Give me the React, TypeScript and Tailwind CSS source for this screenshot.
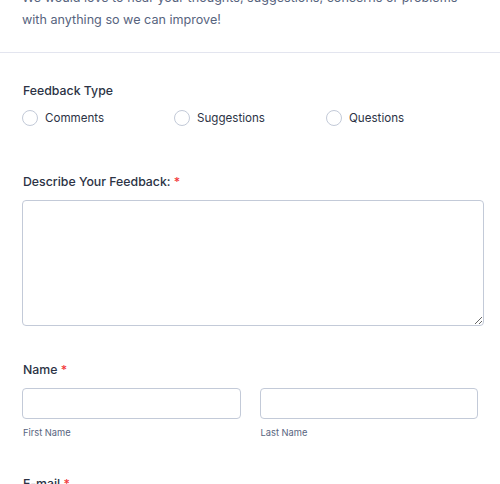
export default function App() {
  const types = ['Comments', 'Suggestions', 'Questions'];

  return (
    <div className="min-h-screen bg-white font-['Inter',sans-serif] text-[#2c3345] overflow-hidden">
      {/* Header description */}
      <div className="px-[22px] pb-[21px] border-b border-[#e3e5ef]">
        <p className="-mt-[13px] text-[12.6px] leading-[22px] text-[#57647e]">
          We would love to hear your thoughts, suggestions, concerns or problems with anything so we can
          improve!
        </p>
      </div>

      <div className="px-[22px]">
        {/* Feedback type */}
        <div className="pt-[30px]">
          <label className="block text-[12.3px] leading-[16px] font-medium ml-[1px]">Feedback Type</label>
          <div className="grid grid-cols-3 mt-[11px]">
            {types.map((t) => (
              <label key={t} className="flex items-center gap-[7px]">
                <span className="w-[16px] h-[16px] rounded-full border border-[#c3cad8] bg-white" />
                <span className="text-[11.6px] leading-[16px]">{t}</span>
              </label>
            ))}
          </div>
        </div>

        {/* Describe */}
        <div className="pt-[48px]">
          <label className="block text-[12.3px] leading-[16px] font-medium ml-[1px]">
            Describe Your Feedback: <span className="text-[#f23a3c]">*</span>
          </label>
          <textarea className="mt-[10px] block w-[462px] h-[126px] rounded-[4px] border border-[#c3cad8] bg-white resize-y outline-none" />
        </div>

        {/* Name */}
        <div className="pt-[36px]">
          <label className="block text-[12.3px] leading-[16px] font-medium ml-[1px]">
            Name <span className="text-[#f23a3c]">*</span>
          </label>
          <div className="flex gap-[19px] mt-[10px]">
            <div className="flex-1">
              <input className="block w-full h-[31px] rounded-[4px] border border-[#c3cad8] bg-white outline-none" />
              <span className="block mt-[8px] ml-[1px] text-[9.3px] leading-[12px] text-[#57647e]">First Name</span>
            </div>
            <div className="flex-1">
              <input className="block w-full h-[31px] rounded-[4px] border border-[#c3cad8] bg-white outline-none" />
              <span className="block mt-[8px] ml-[1px] text-[9.3px] leading-[12px] text-[#57647e]">Last Name</span>
            </div>
          </div>
        </div>

        {/* Email */}
        <div className="pt-[37px]">
          <label className="block text-[12.3px] leading-[16px] font-medium ml-[1px]">
            E-mail <span className="text-[#f23a3c]">*</span>
          </label>
        </div>
      </div>
    </div>
  );
}
